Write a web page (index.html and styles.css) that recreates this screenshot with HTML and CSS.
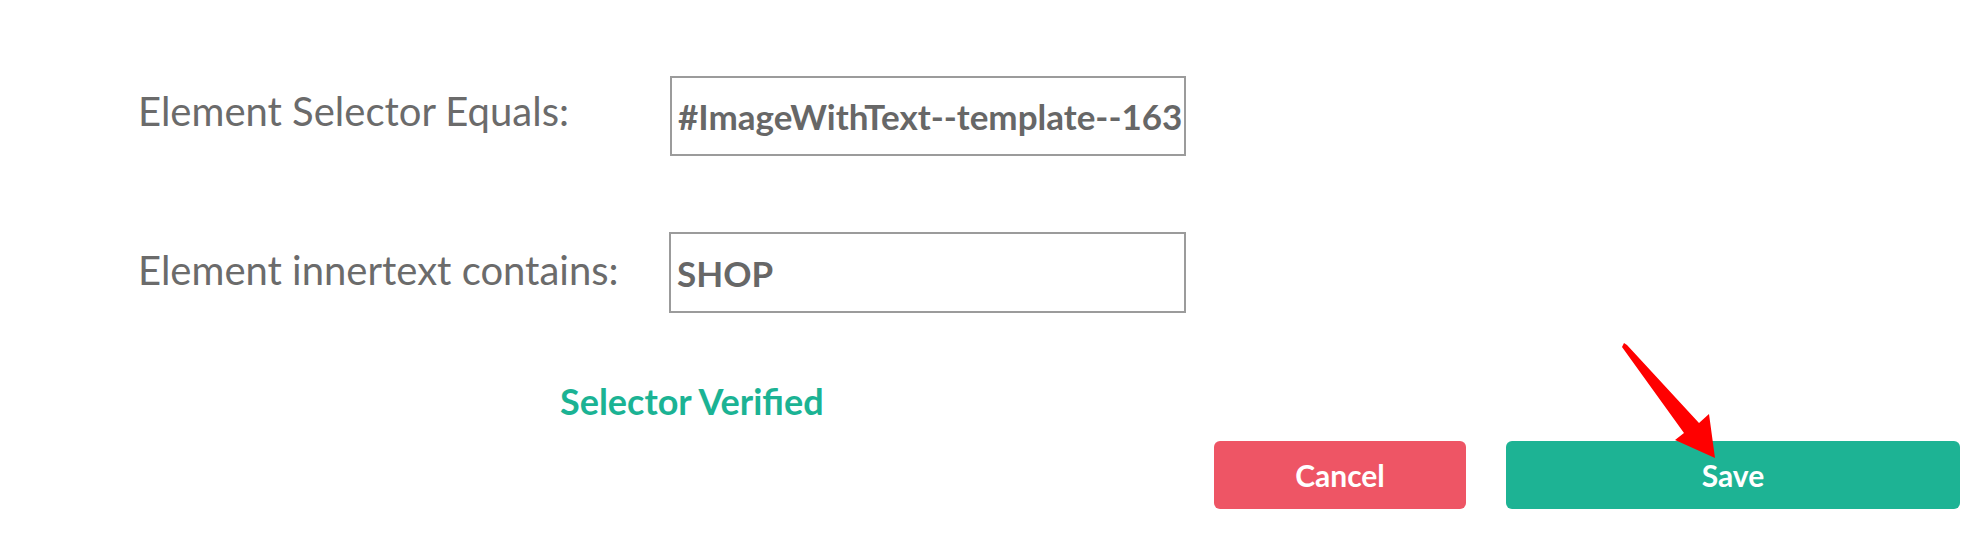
FILE: index.html
```html
<!DOCTYPE html>
<html>
<head>
<meta charset="utf-8">
<link rel="stylesheet" href="styles.css">
</head>
<body>
<div class="page">
  <div class="row row-first">
    <div class="label">Element Selector Equals:</div>
    <div class="field"><span class="field-text">#ImageWithText--template--163</span></div>
  </div>
  <div class="row row-second">
    <div class="label">Element innertext contains:</div>
    <div class="field"><span class="field-text">SHOP</span></div>
  </div>
  <div class="status">Selector Verified</div>
  <div class="actions">
    <button class="btn btn-cancel">Cancel</button>
    <button class="btn btn-save">Save</button>
  </div>
</div>
<svg class="arrow" width="1966" height="546" viewBox="0 0 1966 546">
  <polygon points="1624,343 1627,345 1699,423 1709,414 1715,458 1675,440 1684,433 1622,347" fill="#ff0000"/>
</svg>
</body>
</html>
```
FILE: styles.css
```css
html, body {
  margin: 0;
  padding: 0;
  background: #ffffff;
}
body {
  width: 1966px;
  height: 546px;
  overflow: hidden;
  position: relative;
  font-family: Lato, "Liberation Sans", sans-serif;
}
.page {
  display: flex;
  flex-direction: column;
  padding: 76px 6px 0 138px;
}
.row {
  display: flex;
  align-items: center;
}
.row-second {
  margin-top: 76px;
}
.label {
  width: 532px;
  font-size: 40px;
  color: #6b6b6b;
}
.row-first .label {
  margin-top: -10px;
}
.row-second .label {
  margin-top: -6px;
}
.field {
  box-sizing: border-box;
  width: 516px;
  height: 80px;
  border: 2px solid #9b9b9b;
  display: flex;
  align-items: center;
  padding-left: 6px;
  overflow: hidden;
  white-space: nowrap;
}
.row-second .field {
  height: 81px;
  margin-left: -1px;
  width: 517px;
}
.field-text {
  font-size: 35px;
  font-weight: 700;
  color: #676767;
}
.status {
  margin-top: 66px;
  margin-left: 422px;
  font-size: 36px;
  font-weight: 700;
  color: #1bb394;
}
.actions {
  display: flex;
  justify-content: flex-end;
  gap: 40px;
  margin-top: 18px;
}
.btn {
  height: 68px;
  border: none;
  border-radius: 6px;
  font-family: Lato, "Liberation Sans", sans-serif;
  font-size: 30px;
  font-weight: 700;
  color: #ffffff;
  cursor: pointer;
}
.btn-cancel {
  width: 252px;
  background: #ee5565;
}
.btn-save {
  width: 454px;
  background: #1db394;
}
.arrow {
  position: absolute;
  left: 0;
  top: 0;
  pointer-events: none;
}
```
